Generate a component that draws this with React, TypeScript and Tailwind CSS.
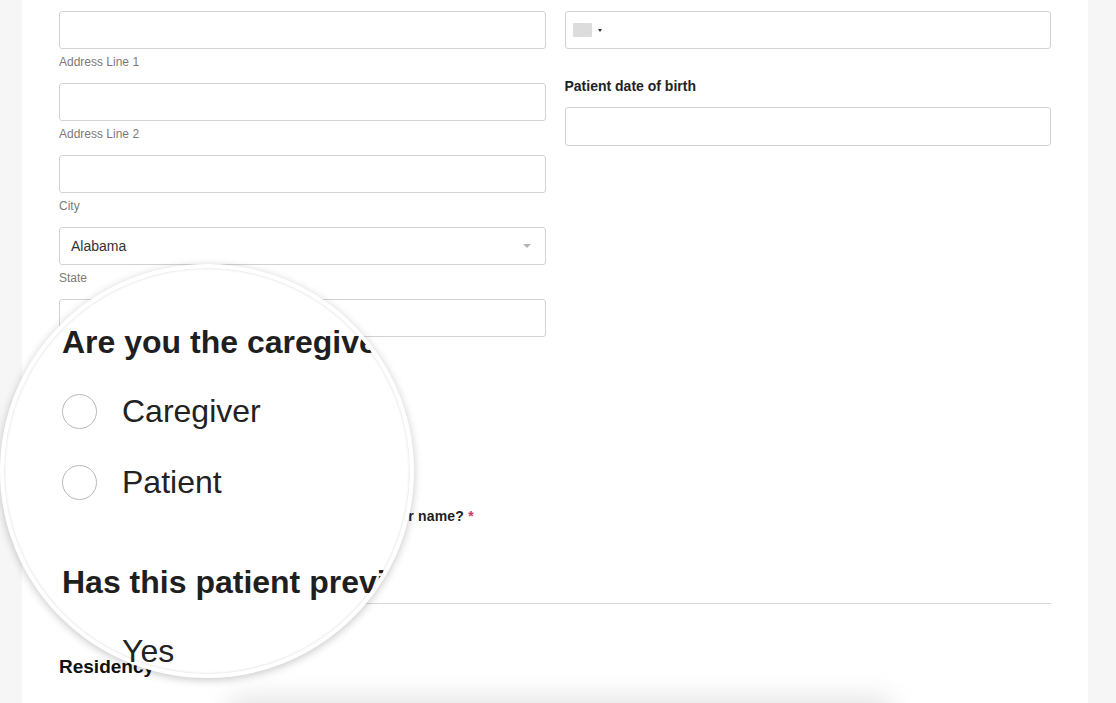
import React from "react";

const inputCls = "h-[38px] w-full rounded-[3px] border border-[#d2d2d2] bg-white";

function Field({ label }: { label: string }) {
  return (
    <div className="mb-[14px]">
      <div className={inputCls} />
      <div className="mt-[6px] text-[12px] leading-[14px] text-[#7a7a7a]">{label}</div>
    </div>
  );
}

function BigRadio({ label }: { label?: string }) {
  return (
    <div className="flex h-[36px] items-center gap-[25px]">
      <span className="h-[35px] w-[35px] shrink-0 rounded-full border-[1.5px] border-[#b8b8b8] bg-white" />
      {label && <span className="text-[32px] leading-[36px] text-[#222]">{label}</span>}
    </div>
  );
}

export default function App() {
  return (
    <div className="relative h-[703px] w-[1116px] overflow-hidden bg-[#f6f6f6] font-['Liberation_Sans',Arial,sans-serif]">
      <div className="ml-[22px] h-full w-[1066px] bg-white px-[37px] pt-[11px]">
        <div className="grid grid-cols-2 gap-x-[19px]">
          <div>
            <Field label="Address Line 1" />
            <Field label="Address Line 2" />
            <Field label="City" />
            <div className="mb-[14px]">
              <div className={`${inputCls} flex items-center justify-between pl-[11px] pr-[14px]`}>
                <span className="text-[14px] text-[#333]">Alabama</span>
                <span className="h-0 w-0 border-x-[4px] border-t-[4px] border-x-transparent border-t-[#b5b5b5]" />
              </div>
              <div className="mt-[6px] text-[12px] leading-[14px] text-[#7a7a7a]">State</div>
            </div>
            <div>
              <div className={inputCls} />
              <div className="mt-[6px] text-[12px] leading-[14px] text-[#7a7a7a]">Zip Code</div>
            </div>
          </div>
          <div>
            <div className={`${inputCls} flex items-center gap-[6px] pl-[7px]`}>
              <span className="h-[14px] w-[19px] rounded-[1px] bg-[#dcdcdc]" />
              <span className="h-0 w-0 border-x-[2.5px] border-t-[3px] border-x-transparent border-t-[#333]" />
            </div>
            <div className="mt-[29px] text-[14px] font-bold leading-[17px] text-[#222]">Patient date of birth</div>
            <div className="mt-[12px] h-[39px] w-full rounded-[3px] border border-[#d2d2d2] bg-white" />
          </div>
        </div>

        <div className="mt-[20px] text-[14px] font-bold leading-[17px] text-[#222]">Are you the caregiver?</div>
        <div className="mt-[6px] flex items-center gap-[8px] text-[14px] leading-[20px] text-[#333]">
          <span className="h-[14px] w-[14px] rounded-full border border-[#b8b8b8]" />
          Caregiver
        </div>
        <div className="mt-[6px] flex items-center gap-[8px] text-[14px] leading-[20px] text-[#333]">
          <span className="h-[14px] w-[14px] rounded-full border border-[#b8b8b8]" />
          Patient
        </div>

        <div className="mt-[62px] whitespace-nowrap text-[14px] font-bold leading-[17px] tracking-[0.2px] text-[#222]">
          If you are the caregiver for this patient, what is your name? <span className="text-[#d3395f]">*</span>
        </div>

        <div className="mt-[78px] h-px w-full bg-[#d8d8d8]" />

        <div className="mt-[52px] text-[19px] font-bold leading-[22px] text-[#111]">Residency</div>
      </div>

      {/* soft shadow at the bottom edge */}
      <div className="absolute left-[225px] top-[696px] h-[40px] w-[670px] rounded-[40px] bg-[#e6e6e6] blur-[12px]" />

      {/* magnifier */}
      <div className="absolute left-[0px] top-[264px] h-[414px] w-[414px]">
        <div className="h-full w-full overflow-hidden rounded-full border-[4px] border-white bg-white shadow-[0_2px_8px_rgba(0,0,0,0.22),inset_0_0_3px_rgba(0,0,0,0.18)]">
          <div className="pl-[58px] pt-[56px]">
            <div className="whitespace-nowrap text-[32px] font-bold leading-[36px] text-[#1f1f1f]">
              Are you the caregiver or the patient?
            </div>
            <div className="mt-[33px]">
              <BigRadio label="Caregiver" />
            </div>
            <div className="mt-[35px]">
              <BigRadio label="Patient" />
            </div>
            <div className="mt-[64px] whitespace-nowrap text-[32px] font-bold leading-[36px] text-[#1f1f1f]">
              Has this patient previously been treated?
            </div>
            <div className="mt-[33px]">
              <BigRadio />
            </div>
          </div>
        </div>
        <span className="absolute left-[122px] top-[369px] text-[32px] leading-[36px] text-[#222]">Yes</span>
      </div>
    </div>
  );
}
